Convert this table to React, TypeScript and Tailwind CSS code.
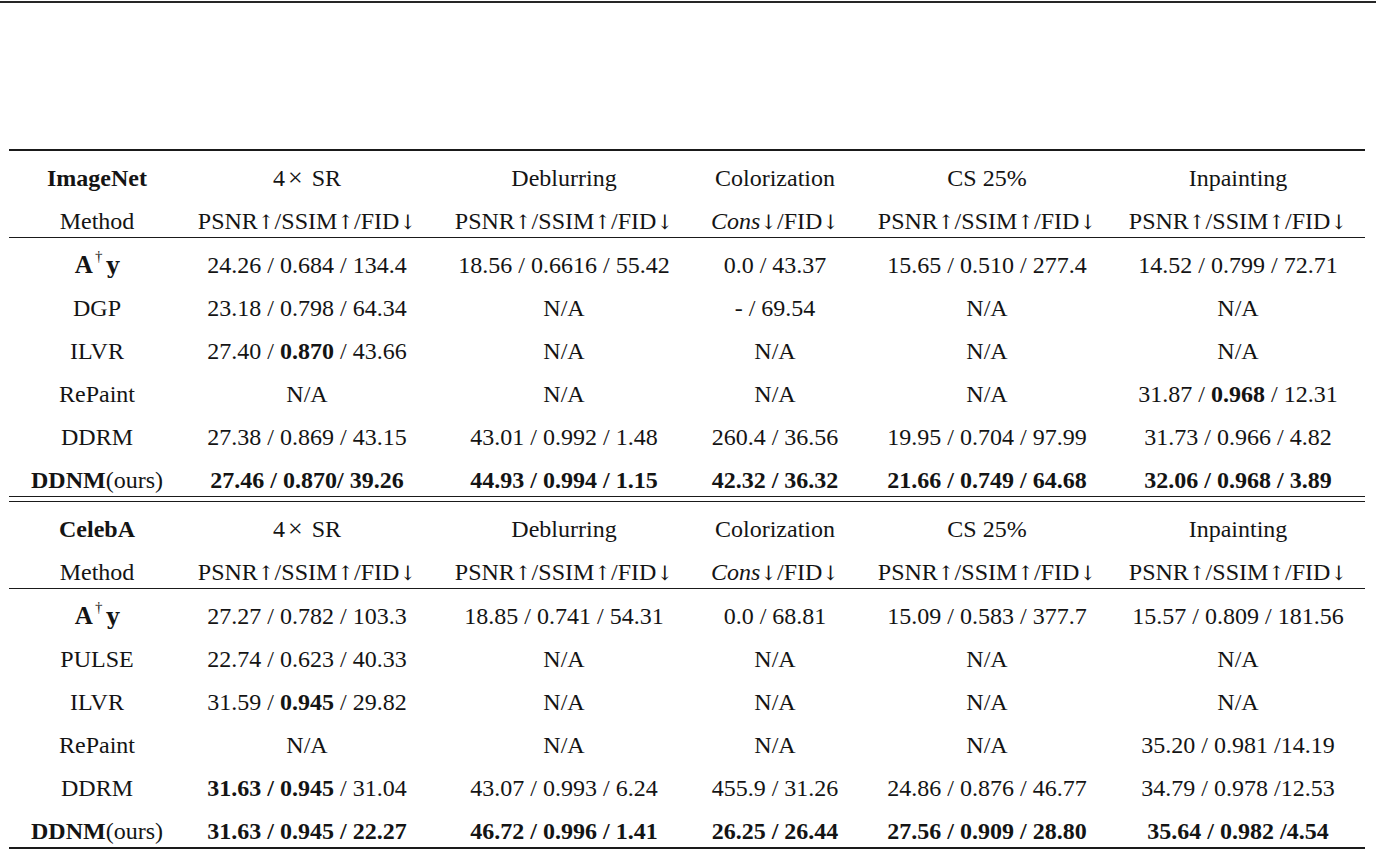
import type { ReactNode } from "react";

type Row = { label: ReactNode; cells: ReactNode[] };

const NA = "N/A";

const Up = () => <span className="font-['DejaVu_Serif',serif] text-[20px] font-normal">↑</span>;
const Down = () => <span className="font-['DejaVu_Serif',serif] text-[20px] font-normal">↓</span>;

const pinv = (
  <span className="text-[25px] font-bold">
    A
    <sup className="relative -top-[3px] mr-[4px] ml-[2px] align-super text-[15px] font-normal">†</sup>
    <span className="font-['DejaVu_Serif',serif] text-[22px]">y</span>
  </span>
);

const metric = (
  <span>
    PSNR<Up />/SSIM<Up />/FID<Down />
  </span>
);
const cons = (
  <span>
    <i>Cons</i>
    <Down />/FID<Down />
  </span>
);

const ours = (
  <span>
    <b>DDNM</b>(ours)
  </span>
);

const imagenetRows: Row[] = [
  {
    label: pinv,
    cells: ["24.26 / 0.684 / 134.4", "18.56 / 0.6616 / 55.42", "0.0 / 43.37", "15.65 / 0.510 / 277.4", "14.52 / 0.799 / 72.71"],
  },
  { label: "DGP", cells: ["23.18 / 0.798 / 64.34", NA, "- / 69.54", NA, NA] },
  {
    label: "ILVR",
    cells: [<span>27.40 / <b>0.870</b> / 43.66</span>, NA, NA, NA, NA],
  },
  {
    label: "RePaint",
    cells: [NA, NA, NA, NA, <span>31.87 / <b>0.968</b> / 12.31</span>],
  },
  {
    label: "DDRM",
    cells: ["27.38 / 0.869 / 43.15", "43.01 / 0.992 / 1.48", "260.4 / 36.56", "19.95 / 0.704 / 97.99", "31.73 / 0.966 / 4.82"],
  },
  {
    label: ours,
    cells: [
      <b>27.46 / 0.870/ 39.26</b>,
      <b>44.93 / 0.994 / 1.15</b>,
      <b>42.32 / 36.32</b>,
      <b>21.66 / 0.749 / 64.68</b>,
      <b>32.06 / 0.968 / 3.89</b>,
    ],
  },
];

const celebaRows: Row[] = [
  {
    label: pinv,
    cells: ["27.27 / 0.782 / 103.3", "18.85 / 0.741 / 54.31", "0.0 / 68.81", "15.09 / 0.583 / 377.7", "15.57 / 0.809 / 181.56"],
  },
  { label: "PULSE", cells: ["22.74 / 0.623 / 40.33", NA, NA, NA, NA] },
  {
    label: "ILVR",
    cells: [<span>31.59 / <b>0.945</b> / 29.82</span>, NA, NA, NA, NA],
  },
  { label: "RePaint", cells: [NA, NA, NA, NA, "35.20 / 0.981 /14.19"] },
  {
    label: "DDRM",
    cells: [
      <span><b>31.63 / 0.945</b> / 31.04</span>,
      "43.07 / 0.993 / 6.24",
      "455.9 / 31.26",
      "24.86 / 0.876 / 46.77",
      "34.79 / 0.978 /12.53",
    ],
  },
  {
    label: ours,
    cells: [
      <b>31.63 / 0.945 / 22.27</b>,
      <b>46.72 / 0.996 / 1.41</b>,
      <b>26.25 / 26.44</b>,
      <b>27.56 / 0.909 / 28.80</b>,
      <b>35.64 / 0.982 /4.54</b>,
    ],
  },
];

const tasks: ReactNode[] = [
  <span>
    4<span className="ml-[3px] mr-[9px] text-[26px]">×</span>SR
  </span>,
  "Deblurring",
  "Colorization",
  "CS 25%",
  "Inpainting",
];

const TableRow = ({ label, cells }: { label: ReactNode; cells: ReactNode[] }) => (
  <div className="grid h-[43px] grid-cols-[176px_244px_270px_152px_272px_230px] pt-[15px] leading-[24px]">
    <div className="text-center whitespace-nowrap">{label}</div>
    {cells.map((c, i) => (
      <div key={i} className="text-center whitespace-nowrap">
        {c}
      </div>
    ))}
  </div>
);

const Block = ({ name, rows }: { name: string; rows: Row[] }) => (
  <div>
    <TableRow label={<b>{name}</b>} cells={tasks} />
    <TableRow label="Method" cells={[metric, metric, cons, metric, metric]} />
    <div className="h-px bg-[#1a1a1a]" />
    {rows.map((r, i) => (
      <TableRow key={i} label={r.label} cells={r.cells} />
    ))}
  </div>
);

export default function App() {
  return (
    <div
      className="h-[850px] w-[1376px] overflow-hidden bg-white text-[24px] text-[#141414]"
      style={{ fontFamily: '"Liberation Serif", "Times New Roman", serif' }}
    >
      <div className="mt-px h-[2px] bg-[#262626]" />
      <div className="ml-[9px] mt-[146px] w-[1356px]">
        <div className="h-[2px] bg-[#1a1a1a]" />
        <Block name="ImageNet" rows={imagenetRows} />
        <div className="h-[6px] border-y border-[#1a1a1a]" />
        <Block name="CelebA" rows={celebaRows} />
        <div className="h-[2px] bg-[#1a1a1a]" />
      </div>
    </div>
  );
}
